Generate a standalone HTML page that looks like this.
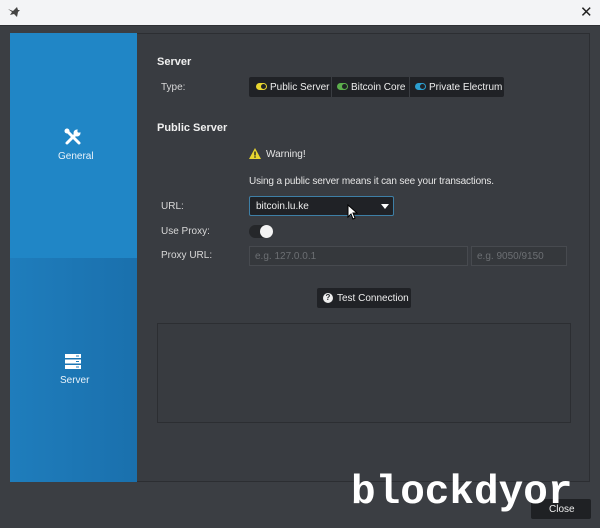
<!DOCTYPE html>
<html><head><style>
body{margin:0;width:600px;height:528px;background:#3b3e43;font-family:"Liberation Sans",sans-serif;font-size:10px;color:#e6e6e6;position:relative;overflow:hidden}
.a{position:absolute;white-space:nowrap}
.tb{left:0;top:0;width:600px;height:25px;background:#f3f4f6;border-bottom:1px solid #2e3034}
.panel{left:10px;top:33px;width:580px;height:449px;background:#393c41;border:1px solid #2c2e32;box-sizing:border-box}
.side1{left:10px;top:33px;width:127px;height:225px;background:#2086c6}
.side2{left:10px;top:258px;width:127px;height:224px;background:linear-gradient(90deg,#1f7dbc,#1a70ad)}
.h{font-weight:bold;font-size:11px;color:#f0f0f0}
.lbl{color:#d8d8d8}
.seg{left:249px;top:77px;width:255px;height:20px;background:#202226;border-radius:2px}
.seg span{position:absolute;top:5px;color:#eee;white-space:nowrap}
.tog{position:absolute;top:6px;width:11px;height:7px;border-radius:4px}
.tog i{position:absolute;right:1px;top:1px;width:5px;height:5px;border-radius:3px;background:#202226}
.inp{background:#35383c;border:1px solid #474a4f;color:#6c6f73;box-sizing:border-box;padding:4px 5px}
</style></head><body>
<div class="a tb"></div>
<svg class="a" style="left:7px;top:6px" width="14" height="13" viewBox="0 0 14 13"><path d="M1 3l5 2 4-4 1 3 2 0-2 2-1 5-3-3-4 1 2-3z" fill="#444"/></svg>
<div class="a" style="left:580px;top:3px;font-size:15px;color:#222">✕</div>
<div class="a panel"></div>
<div class="a side1"></div>
<div class="a side2"></div>
<svg class="a" style="left:64px;top:128px" width="18" height="18" viewBox="0 0 18 18"><path d="M3 3l12 12M3 15l10-10" stroke="#fff" stroke-width="3" stroke-linecap="round"/><circle cx="13" cy="5" r="3.5" fill="#fff"/><circle cx="15" cy="3" r="1.6" fill="#2086c6"/><circle cx="3" cy="3" r="2.5" fill="#fff"/></svg>
<div class="a" style="left:58px;top:151px;color:#e8f2fa">General</div>
<svg class="a" style="left:65px;top:354px" width="16" height="15"><rect y="0" width="16" height="4" fill="#fff"/><rect y="5.5" width="16" height="4" fill="#fff"/><rect y="11" width="16" height="4" fill="#fff"/><rect x="11" y="1.5" width="3" height="1" fill="#1f7dbc"/><rect x="11" y="7" width="3" height="1" fill="#1f7dbc"/><rect x="11" y="12.5" width="3" height="1" fill="#1f7dbc"/></svg>
<div class="a" style="left:60px;top:375px;color:#e8f2fa">Server</div>
<div class="a h" style="left:157px;top:56px">Server</div>
<div class="a lbl" style="left:161px;top:82px">Type:</div>
<div class="a seg">
<div class="tog" style="left:7px;background:#e8d630"><i></i></div><span style="left:21px">Public Server</span>
<div class="a" style="left:82px;top:0;width:1px;height:20px;background:#3a3d42"></div>
<div class="tog" style="left:88px;background:#5cae4c"><i></i></div><span style="left:102px">Bitcoin Core</span>
<div class="a" style="left:160px;top:0;width:1px;height:20px;background:#3a3d42"></div>
<div class="tog" style="left:166px;background:#2c9fd0"><i></i></div><span style="left:180px">Private Electrum</span>
</div>
<div class="a h" style="left:157px;top:122px">Public Server</div>
<svg class="a" style="left:249px;top:148px" width="12" height="11"><path d="M6 0L12 11H0z" fill="#e8d630"/><rect x="5.3" y="3.5" width="1.4" height="4" fill="#222"/><rect x="5.3" y="8.3" width="1.4" height="1.4" fill="#222"/></svg>
<div class="a" style="left:266px;top:149px">Warning!</div>
<div class="a" style="left:249px;top:176px;letter-spacing:-0.15px">Using a public server means it can see your transactions.</div>
<div class="a lbl" style="left:161px;top:201px">URL:</div>
<div class="a" style="left:249px;top:196px;width:145px;height:20px;background:#202226;border:1px solid #3e7fa6;box-sizing:border-box;border-radius:2px"></div>
<div class="a" style="left:256px;top:201px;color:#eee">bitcoin.lu.ke</div>
<svg class="a" style="left:381px;top:204px" width="8" height="5"><path d="M0 0h8L4 5z" fill="#fff"/></svg>
<svg class="a" style="left:347px;top:204px" width="11" height="16"><path d="M1 1v12l3-3 2 5 2-1-2-5h4z" fill="#fff" stroke="#000"/></svg>
<div class="a lbl" style="left:161px;top:226px">Use Proxy:</div>
<div class="a" style="left:249px;top:225px;width:24px;height:13px;border-radius:7px;background:#25272a"></div>
<div class="a" style="left:260px;top:225px;width:13px;height:13px;border-radius:7px;background:#f4f4f4"></div>
<div class="a lbl" style="left:161px;top:250px">Proxy URL:</div>
<div class="a inp" style="left:249px;top:246px;width:219px;height:20px">e.g. 127.0.0.1</div>
<div class="a inp" style="left:471px;top:246px;width:96px;height:20px">e.g. 9050/9150</div>
<div class="a" style="left:317px;top:288px;width:94px;height:20px;background:#202226;border-radius:2px"></div>
<div class="a" style="left:323px;top:293px;width:10px;height:10px;border-radius:5px;background:#eee;color:#202226;font-size:8px;font-weight:bold;text-align:center;line-height:10px">?</div>
<div class="a" style="left:337px;top:293px;color:#eee">Test Connection</div>
<div class="a" style="left:157px;top:323px;width:414px;height:100px;border:1px solid #2c2e32;background:#383b40;box-sizing:border-box"></div>
<div class="a" style="left:531px;top:499px;width:60px;height:20px;background:#1f2124;border-radius:2px"></div>
<div class="a" style="left:549px;top:504px;color:#eee">Close</div>
<div class="a" style="left:351px;top:470px;font-family:'Liberation Mono',monospace;font-weight:bold;font-size:41px;color:#fff;letter-spacing:0px">blockdyor</div>
</body></html>
